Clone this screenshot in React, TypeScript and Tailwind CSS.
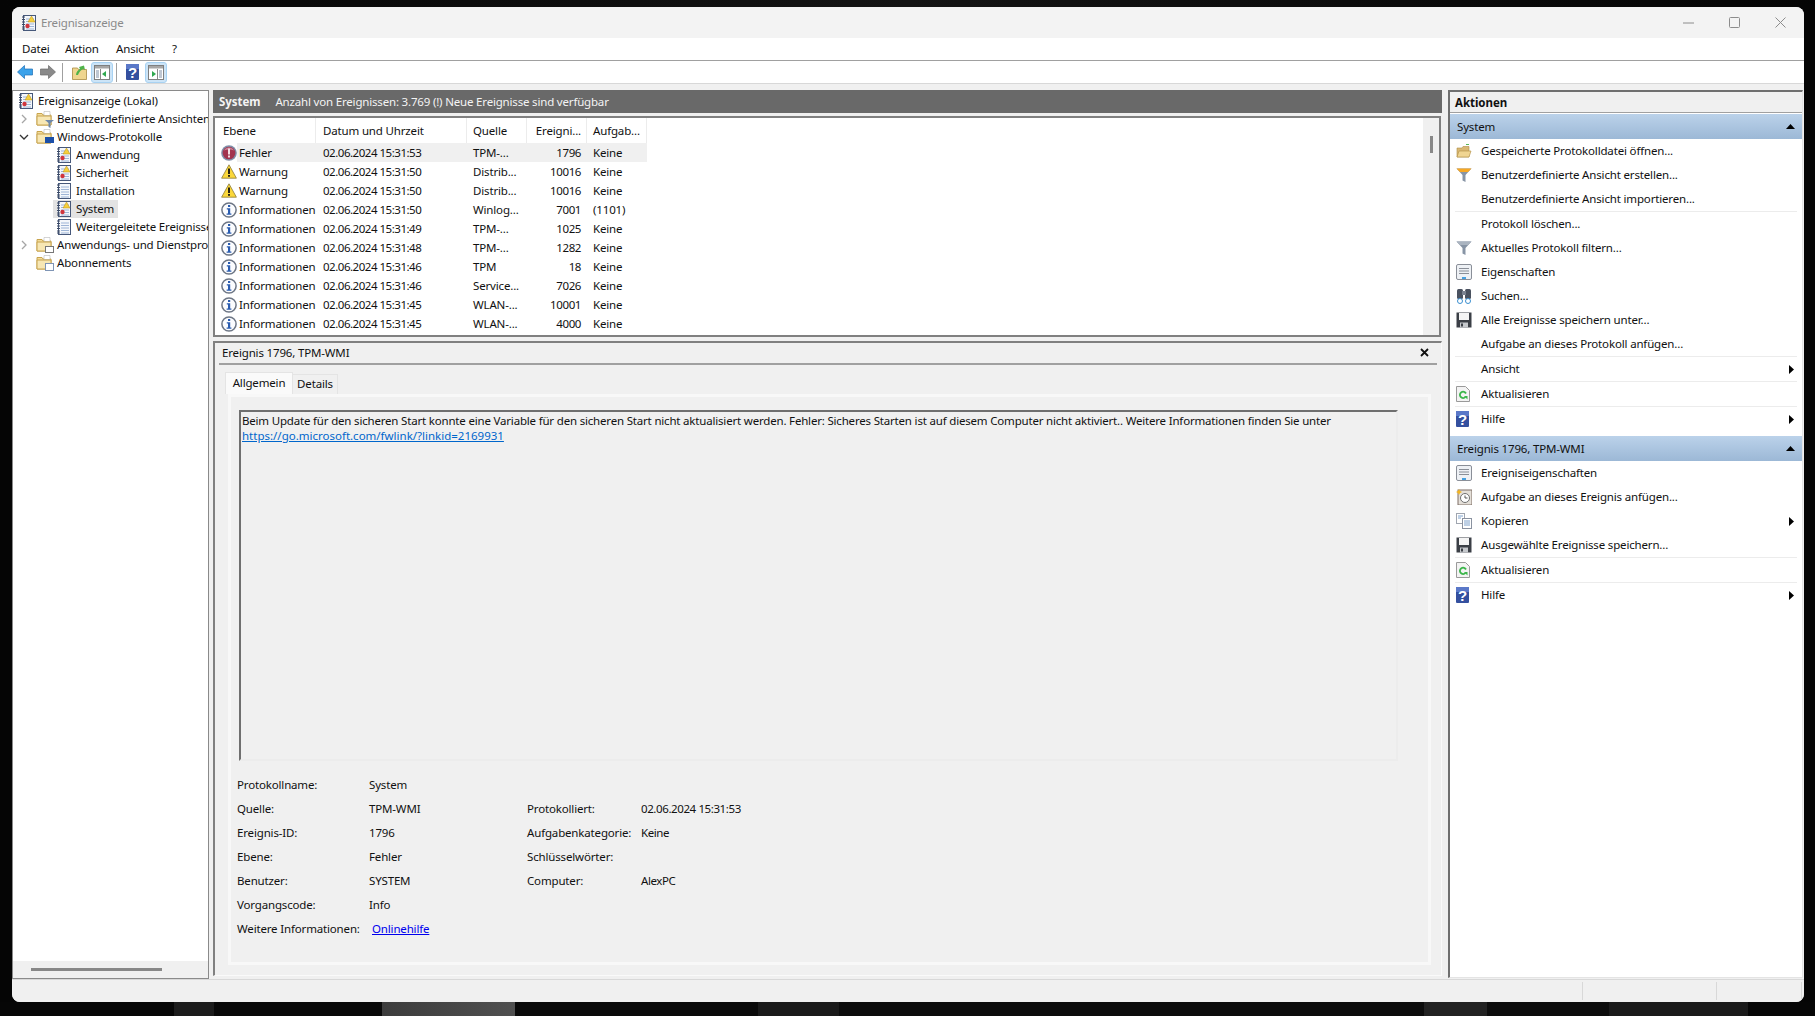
import type { ReactNode } from "react";

const font = "font-['Noto_Sans',sans-serif]";

function LogIcon({ alert = true }: { alert?: boolean }) {
  return (
    <svg width="16" height="16" viewBox="0 0 16 16" className="shrink-0">
      <rect x="2.5" y="0.5" width="12" height="15" fill="#f4f7fb" stroke="#46587a" />
      <path d="M1 2h3M1 4.5h3M1 7h3M1 9.5h3M1 12h3M1 14h3" stroke="#3c4a66" strokeWidth="1" />
      <path d="M5 4h8M5 6.5h8M5 9h8M5 11.5h8M5 14h8" stroke="#9db4d6" strokeWidth="1" />
      {alert && (
        <>
          <path d="M10.5 1l3.5 6H7z" fill="#f5cf3c" stroke="#b98f10" strokeWidth="0.5" />
          <circle cx="6.5" cy="11" r="2.2" fill="#d0353c" />
        </>
      )}
    </svg>
  );
}

function FolderIcon({ badge }: { badge?: ReactNode }) {
  return (
    <svg width="19" height="17" viewBox="0 0 19 17" className="shrink-0">
      <path d="M1 14V2.5h5l1 1.5h8v10z" fill="#f3dc9a" stroke="#c8a44e" />
      <path d="M8 0.5h6v4H8z" fill="#fff" stroke="#b8b8b8" strokeWidth="0.6" />
      <path d="M1 14V5h14v9z" fill="#f7e7b4" stroke="#c8a44e" />
      {badge}
    </svg>
  );
}

function ErrorIcon() {
  return (
    <svg width="16" height="16" viewBox="0 0 16 16" className="shrink-0">
      <circle cx="8" cy="8" r="7.8" fill="#7f8ea8" />
      <circle cx="8" cy="8" r="6.3" fill="#a2344f" />
      <path d="M3 5.5A5.6 5.6 0 0 1 13 5.5C10 4 6 4 3 5.5z" fill="#c77f92" />
      <rect x="7" y="3.5" width="2" height="6" fill="#f4dfe4" />
      <rect x="7" y="10.5" width="2" height="2" fill="#f4dfe4" />
    </svg>
  );
}

function WarnIcon() {
  return (
    <svg width="16" height="15" viewBox="0 0 16 15" className="shrink-0">
      <path d="M8 0.8L15.4 14.2H0.6z" fill="#fbd83a" stroke="#8a7a3a" strokeWidth="0.8" />
      <rect x="7.1" y="4.5" width="1.8" height="5.5" fill="#111" />
      <rect x="7.1" y="11" width="1.8" height="1.8" fill="#111" />
    </svg>
  );
}

function InfoIcon() {
  return (
    <svg width="16" height="16" viewBox="0 0 16 16" className="shrink-0">
      <circle cx="8" cy="8" r="7.1" fill="#fbfcfe" stroke="#6d7685" strokeWidth="1.5" />
      <rect x="7" y="3" width="2.2" height="2" fill="#2a5cb0" />
      <path d="M5.8 6.3h3.4v5.2h1.2v1.3H5.6v-1.3H7V7.6H5.8z" fill="#2a5cb0" />
    </svg>
  );
}

function HelpIcon() {
  return (
    <svg width="13" height="16" viewBox="0 0 13 16" className="shrink-0">
      <rect x="0" y="0" width="13" height="16" rx="1" fill="#34509f" />
      <rect x="0" y="0" width="13" height="5" fill="#5a78c8" />
      <text x="6.5" y="13.5" textAnchor="middle" fontSize="15" fontWeight="700" fill="#fff" fontFamily="Liberation Sans">?</text>
    </svg>
  );
}

function PanelIcon({ side }: { side: "left" | "right" }) {
  return (
    <svg width="16" height="15" viewBox="0 0 16 15">
      <rect x="0.5" y="0.5" width="15" height="14" fill="#fff" stroke="#7f7f7f" />
      <rect x="1" y="1" width="14" height="2.5" fill="#a6a6a6" />
      {side === "left" ? (
        <>
          <path d="M2 6h3M2 8h3M2 10h3M2 12h3" stroke="#7f8fa6" />
          <path d="M12 6v6L8 9z" fill="#2fa84f" />
          <path d="M6.5 4v10" stroke="#8a8a8a" />
        </>
      ) : (
        <>
          <path d="M11 6h3M11 8h3M11 10h3M11 12h3" stroke="#7f8fa6" />
          <path d="M4 6v6l4-3z" fill="#2fa84f" />
          <path d="M9.5 4v10" stroke="#8a8a8a" />
        </>
      )}
    </svg>
  );
}

function Chevron({ open }: { open?: boolean }) {
  return (
    <svg width="10" height="10" viewBox="0 0 10 10" className="shrink-0">
      {open ? (
        <path d="M1 3l4 4 4-4" fill="none" stroke="#333" strokeWidth="1.3" />
      ) : (
        <path d="M3 1l4 4-4 4" fill="none" stroke="#a6a6a6" strokeWidth="1.3" />
      )}
    </svg>
  );
}

function FilterIcon({ color }: { color: string }) {
  return (
    <svg width="16" height="16" viewBox="0 0 16 16">
      <path d="M0.5 1.5h15L9.5 8v7l-3-1.5V8z" fill="#8794a5" />
      <path d="M0.5 1.5h15L12 5H4z" fill={color} />
    </svg>
  );
}

function PropsIcon() {
  return (
    <svg width="16" height="16" viewBox="0 0 16 16">
      <rect x="0.5" y="0.5" width="15" height="15" rx="1.5" fill="#eef1f5" stroke="#8a8f98" />
      <path d="M3 4.5h10M3 7h10M3 9.5h10" stroke="#8a8f98" />
      <rect x="6" y="13" width="4" height="2" fill="#46a0e0" />
    </svg>
  );
}

function SaveIcon() {
  return (
    <svg width="16" height="16" viewBox="0 0 16 16">
      <path d="M0.5 0.5h15v15H0.5z" fill="#3b3f46" />
      <rect x="3" y="1" width="10" height="7" fill="#f4f4f4" />
      <rect x="4" y="10.5" width="8" height="5" fill="#c5c8cc" />
      <rect x="5" y="11.5" width="2" height="3" fill="#3b3f46" />
    </svg>
  );
}

function RefreshIcon() {
  return (
    <svg width="14" height="16" viewBox="0 0 14 16">
      <path d="M0.5 0.5h9l4 4v11H0.5z" fill="#f3f3f3" stroke="#9a9a9a" />
      <path d="M10 7.5A3.2 3.2 0 1 0 9.5 11" fill="none" stroke="#3bb54a" strokeWidth="1.8" />
      <path d="M8 10h3.5v3.5z" fill="#3bb54a" />
    </svg>
  );
}

function OpenFolderIcon() {
  return (
    <svg width="16" height="16" viewBox="0 0 16 16">
      <path d="M10 1.5h3" stroke="#58b858" />
      <path d="M1 14V5h5l1-1.5h6V14z" fill="#d9b874" stroke="#b08d44" strokeWidth="0.6" />
      <path d="M1 14l2-6h12l-2 6z" fill="#f0d592" stroke="#b08d44" strokeWidth="0.6" />
    </svg>
  );
}

function BinocularsIcon() {
  return (
    <svg width="16" height="16" viewBox="0 0 16 16">
      <rect x="1" y="1" width="6" height="10" rx="1.5" fill="#4a5260" />
      <rect x="9" y="1" width="6" height="10" rx="1.5" fill="#4a5260" />
      <rect x="6" y="3" width="4" height="4" fill="#7a8290" />
      <circle cx="4" cy="13" r="2.5" fill="#fff" stroke="#3b8fd0" />
      <circle cx="12" cy="13" r="2.5" fill="#fff" stroke="#3b8fd0" />
    </svg>
  );
}

function TaskIcon() {
  return (
    <svg width="16" height="16" viewBox="0 0 16 16">
      <rect x="2" y="1" width="14" height="15" fill="#e4dfd8" stroke="#7e6f66" />
      <circle cx="9" cy="9" r="4.5" fill="#fff" stroke="#6f6f6f" />
      <path d="M9 6.5V9h2.5" fill="none" stroke="#555" />
      <path d="M3 0l1 2 2 1-2 1-1 2-1-2-2-1 2-1z" fill="#f3b521" />
    </svg>
  );
}

function CopyIcon() {
  return (
    <svg width="16" height="16" viewBox="0 0 16 16">
      <rect x="0.5" y="0.5" width="8" height="10" fill="#fff" stroke="#a0a6b0" />
      <rect x="6.5" y="5.5" width="9" height="10" fill="#fff" stroke="#8a92a0" />
      <path d="M2 3h5M2 5h3M8 8h6M8 10h6M8 12h6" stroke="#7ea2cc" />
    </svg>
  );
}

function TreeRow({
  indent,
  chevron,
  icon,
  label,
  selected,
  wide,
}: {
  indent: string;
  chevron?: "open" | "closed";
  icon: ReactNode;
  label: string;
  selected?: boolean;
  wide?: boolean;
}) {
  return (
    <div className={`flex h-[18px] items-center whitespace-nowrap ${indent}`}>
      {chevron && (
        <span className="mr-[4px] ml-[6px] flex w-[10px] justify-center">
          <Chevron open={chevron === "open"} />
        </span>
      )}
      <div className={`flex h-[18px] items-center pr-[4px] pl-[3px] ${selected ? "bg-[#e3e3e3]" : ""}`}>
        <span className={`flex shrink-0 ${wide ? "w-[21px]" : "w-[20px]"}`}>{icon}</span>
        <span>{label}</span>
      </div>
    </div>
  );
}

const events = [
  ["err", "Fehler", "02.06.2024 15:31:53", "TPM-...", "1796", "Keine"],
  ["warn", "Warnung", "02.06.2024 15:31:50", "Distrib...", "10016", "Keine"],
  ["warn", "Warnung", "02.06.2024 15:31:50", "Distrib...", "10016", "Keine"],
  ["info", "Informationen", "02.06.2024 15:31:50", "Winlog...", "7001", "(1101)"],
  ["info", "Informationen", "02.06.2024 15:31:49", "TPM-...", "1025", "Keine"],
  ["info", "Informationen", "02.06.2024 15:31:48", "TPM-...", "1282", "Keine"],
  ["info", "Informationen", "02.06.2024 15:31:46", "TPM", "18", "Keine"],
  ["info", "Informationen", "02.06.2024 15:31:46", "Service...", "7026", "Keine"],
  ["info", "Informationen", "02.06.2024 15:31:45", "WLAN-...", "10001", "Keine"],
  ["info", "Informationen", "02.06.2024 15:31:45", "WLAN-...", "4000", "Keine"],
];

function EventRow({ ev, selected }: { ev: string[]; selected: boolean }) {
  return (
    <div className="flex h-[19px] items-center whitespace-nowrap">
      <span className="flex w-[20px] shrink-0 justify-start pl-[4px]">
        {ev[0] === "err" ? <ErrorIcon /> : ev[0] === "warn" ? <WarnIcon /> : <InfoIcon />}
      </span>
      <div className={`flex h-[19px] items-center ${selected ? "bg-[#f0f0f0]" : ""}`}>
        <span className="w-[86px] pl-[2px]">{ev[1]}</span>
        <span className="w-[150px] tracking-[-0.48px]">{ev[2]}</span>
        <span className="w-[54px]">{ev[3]}</span>
        <span className="w-[60px] pr-[6px] text-right tracking-[-0.4px]">{ev[4]}</span>
        <span className="w-[60px] pl-[6px]">{ev[5]}</span>
      </div>
    </div>
  );
}

function SectionHead({ title }: { title: string }) {
  return (
    <div className="flex h-[25px] items-center justify-between bg-gradient-to-b from-[#bbd2ea] to-[#9cb8d6] pr-[7px] pl-[7px]">
      <span>{title}</span>
      <svg width="9" height="5" viewBox="0 0 9 5">
        <path d="M0 5L4.5 0 9 5z" fill="#000" />
      </svg>
    </div>
  );
}

function ActionRow({ icon, label, arrow, line }: { icon?: ReactNode; label: string; arrow?: boolean; line?: boolean }) {
  return (
    <div className={line ? "mx-[5px] border-b border-[#ececec]" : "mx-[5px]"}>
      <div className="flex h-[24px] items-center">
        <span className="flex w-[26px] shrink-0 justify-start pl-[1px]">{icon}</span>
        <span className="flex-1 whitespace-nowrap">{label}</span>
        {arrow && (
          <svg width="5" height="9" viewBox="0 0 5 9" className="mr-[3px]">
            <path d="M0 0l5 4.5L0 9z" fill="#000" />
          </svg>
        )}
      </div>
    </div>
  );
}

const infoLeft = [
  ["Protokollname:", "System"],
  ["Quelle:", "TPM-WMI"],
  ["Ereignis-ID:", "1796"],
  ["Ebene:", "Fehler"],
  ["Benutzer:", "SYSTEM"],
  ["Vorgangscode:", "Info"],
];

const infoRight = [
  ["", ""],
  ["Protokolliert:", "02.06.2024 15:31:53"],
  ["Aufgabenkategorie:", "Keine"],
  ["Schlüsselwörter:", ""],
  ["Computer:", "AlexPC"],
  ["", ""],
];

export default function App() {
  return (
    <div className={`flex h-[1016px] w-[1815px] flex-col overflow-hidden bg-[#050505] text-[11.5px] tracking-[-0.16px] text-[#111] ${font}`}>
      {/* wallpaper above the window */}
      <div className="h-[7px] shrink-0 bg-gradient-to-r from-[#050505] via-[#141414] to-[#050505]" />

      <div className="ml-[12px] flex h-[995px] w-[1792px] shrink-0 flex-col overflow-hidden rounded-lg bg-[#f0f0f0]">
        {/* title bar */}
        <div className="flex h-[31px] shrink-0 items-center justify-between bg-[#f3f3f3] pr-[18px] pl-[9px]">
          <div className="flex items-center gap-[4px] text-[#8a8a8a]">
            <LogIcon />
            <span>Ereignisanzeige</span>
          </div>
          <div className="flex items-center gap-[35px]">
            <svg width="11" height="11" viewBox="0 0 11 11"><path d="M0 6h11" stroke="#8c8c8c" /></svg>
            <svg width="11" height="11" viewBox="0 0 11 11"><rect x="0.5" y="0.5" width="10" height="10" rx="1" fill="none" stroke="#8c8c8c" /></svg>
            <svg width="11" height="11" viewBox="0 0 11 11"><path d="M0.5 0.5l10 10M10.5 0.5l-10 10" stroke="#8c8c8c" /></svg>
          </div>
        </div>
        {/* menu */}
        <div className="flex h-[23px] shrink-0 items-center border-b border-[#a0a0a0] bg-white pl-[10px]">
          <span className="w-[43px]">Datei</span>
          <span className="w-[51px]">Aktion</span>
          <span className="w-[56px]">Ansicht</span>
          <span>?</span>
        </div>
        {/* toolbar */}
        <div className="flex h-[23px] shrink-0 items-center border-b border-[#d8d8d8] bg-white pl-[5px]">
          <svg width="16" height="14" viewBox="0 0 16 14">
            <path d="M0.5 7l7-6.5V4h8v6h-8v3.5z" fill="#3ba2ea" stroke="#1e6fb5" strokeWidth="0.7" />
          </svg>
          <svg width="16" height="14" viewBox="0 0 16 14" className="ml-[7px]">
            <path d="M15.5 7L8.5 0.5V4h-8v6h8v3.5z" fill="#8a8a8a" stroke="#6a6a6a" strokeWidth="0.7" />
          </svg>
          <span className="mx-[6px] h-[19px] w-px bg-[#a0a0a0]" />
          <svg width="15" height="15" viewBox="0 0 15 15" className="ml-[3px]">
            <path d="M0.5 14.5V3h5l1 1.5h8v10z" fill="#efd58e" stroke="#a98b42" strokeWidth="0.8" />
            <path d="M4 10c0-3 2-5 4-6L7 2l5-1.5L13 5l-2-1c-2 1-4 3-5 6z" fill="#4fb34a" />
          </svg>
          <span className="ml-[4px] flex h-[21px] w-[22px] items-center justify-center rounded-[3px] border border-[#a8d2f2] bg-[#cce4f7]">
            <PanelIcon side="left" />
          </span>
          <span className="mx-[3px] h-[19px] w-px bg-[#a0a0a0]" />
          <span className="ml-[6px] flex">
            <HelpIcon />
          </span>
          <span className="ml-[6px] flex h-[21px] w-[22px] items-center justify-center rounded-[3px] border border-[#a8d2f2] bg-[#cce4f7]">
            <PanelIcon side="right" />
          </span>
        </div>

        {/* main area */}
        <div className="flex min-h-0 flex-1 pt-[6px]">
          {/* tree */}
          <div className="flex w-[197px] shrink-0 flex-col border border-[#8a8a8a] bg-white">
            <div className="flex-1 overflow-hidden pt-[1px]">
              <TreeRow indent="pl-[2px]" icon={<LogIcon />} label="Ereignisanzeige (Lokal)" />
              <TreeRow indent="" wide chevron="closed" icon={<FolderIcon badge={<path d="M9 9h9l-3.5 3v5l-2-1v-4z" fill="#6f88a8" />} />} label="Benutzerdefinierte Ansichten" />
              <TreeRow indent="" wide chevron="open" icon={<FolderIcon badge={<rect x="9" y="8" width="9" height="6" fill="#1b4fa8" />} />} label="Windows-Protokolle" />
              <TreeRow indent="pl-[40px]" icon={<LogIcon />} label="Anwendung" />
              <TreeRow indent="pl-[40px]" icon={<LogIcon />} label="Sicherheit" />
              <TreeRow indent="pl-[40px]" icon={<LogIcon alert={false} />} label="Installation" />
              <TreeRow indent="pl-[40px]" icon={<LogIcon />} label="System" selected />
              <TreeRow indent="pl-[40px]" icon={<LogIcon alert={false} />} label="Weitergeleitete Ereignisse" />
              <TreeRow indent="" wide chevron="closed" icon={<FolderIcon badge={<rect x="9.5" y="9.5" width="8" height="6" fill="#fff" stroke="#777" />} />} label="Anwendungs- und Dienstprotokolle" />
              <TreeRow indent="pl-[20px]" wide icon={<FolderIcon badge={<rect x="9.5" y="8.5" width="8" height="7" fill="#fff" stroke="#7f95b5" />} />} label="Abonnements" />
            </div>
            <div className="flex h-[17px] shrink-0 items-center bg-[#f0f0f0] pl-[18px]">
              <div className="h-[3px] w-[131px] bg-[#888]" />
            </div>
          </div>

          {/* centre column */}
          <div className="ml-[4px] flex w-[1229px] shrink-0 flex-col">
            <div className="flex h-[23px] shrink-0 items-center gap-[15px] bg-[#696969] pl-[6px] text-[#f4f4f4]">
              <span className="font-bold tracking-[-0.05px]">System</span>
              <span className="tracking-[-0.18px]">Anzahl von Ereignissen: 3.769 (!) Neue Ereignisse sind verfügbar</span>
            </div>
            <div className="mt-[3px] mr-[1px] flex h-[221px] shrink-0 overflow-hidden border-2 border-[#808080] bg-white">
              <div className="flex-1 overflow-hidden pl-[2px]">
                <div className="flex h-[25px] items-center whitespace-nowrap">
                  <span className="flex h-full w-[99px] items-center border-r border-[#ececec] pl-[6px]">Ebene</span>
                  <span className="flex h-full w-[151px] items-center border-r border-[#ececec] pl-[7px]">Datum und Uhrzeit</span>
                  <span className="flex h-full w-[60px] items-center border-r border-[#ececec] pl-[6px]">Quelle</span>
                  <span className="flex h-full w-[60px] items-center justify-end border-r border-[#ececec] pr-[5px]">Ereigni...</span>
                  <span className="flex h-full w-[60px] items-center border-r border-[#ececec] pl-[6px]">Aufgab...</span>
                </div>
                {events.map((ev, i) => (
                  <EventRow key={i} ev={ev} selected={i === 0} />
                ))}
              </div>
              <div className="flex w-[16px] shrink-0 justify-center bg-[#f0f0f0] pt-[18px]">
                <div className="h-[17px] w-[3px] bg-[#888]" />
              </div>
            </div>

            {/* detail pane */}
            <div className="mt-[4px] mb-[3px] flex min-h-0 flex-1 flex-col border-t-2 border-r border-b border-l-2 border-t-[#808080] border-r-[#fafafa] border-b-[#fafafa] border-l-[#808080] bg-[#f0f0f0] px-[4px] pb-[10px]">
              <div className="flex h-[22px] shrink-0 items-center justify-between border-b-2 border-[#a0a0a0] pr-[8px] pl-[3px]">
                <span>Ereignis 1796, TPM-WMI</span>
                <svg width="9" height="9" viewBox="0 0 9 9" className="mb-[2px]"><path d="M1 1l7 7M8 1l-7 7" stroke="#111" strokeWidth="1.8" /></svg>
              </div>
              <div className="mt-[7px] flex h-[22px] shrink-0 items-end pl-[6px]">
                <span className="flex h-[22px] w-[68px] items-center justify-center border border-b-0 border-[#e4e4e4] bg-[#fafafa] pb-[2px]">Allgemein</span>
                <span className="flex h-[20px] w-[45px] items-center justify-center border-t border-r border-[#e4e4e4] pb-[1px]">Details</span>
              </div>
              <div className="mr-[6px] ml-[9px] flex min-h-0 flex-1 flex-col border-[3px] border-[#f8f8f8] pr-[30px] pl-[8px]">
                <div className="mt-[13px] h-[351px] shrink-0 border-2 border-t-[#6f6f6f] border-r-[#ececec] border-b-[#ececec] border-l-[#6f6f6f] pt-[1px] pl-[1px] leading-[15px]">
                  <div className="whitespace-nowrap tracking-[-0.185px]">
                    Beim Update für den sicheren Start konnte eine Variable für den sicheren Start nicht aktualisiert werden. Fehler: Sicheres Starten ist auf diesem Computer nicht aktiviert.. Weitere Informationen finden Sie unter
                  </div>
                  <div className="tracking-normal text-[#0066cc] underline">https://go.microsoft.com/fwlink/?linkid=2169931</div>
                </div>
                <div className="mt-[12px] ml-[-2px] flex">
                  <div className="w-[290px] shrink-0">
                    {infoLeft.map(([k, v]) => (
                      <div key={k} className="flex h-[24px] items-center">
                        <span className="w-[132px]">{k}</span>
                        <span>{v}</span>
                      </div>
                    ))}
                    <div className="flex h-[24px] items-center">
                      <span className="w-[135px] whitespace-nowrap">Weitere Informationen:</span>
                      <span className="text-[#0000ee] underline">Onlinehilfe</span>
                    </div>
                  </div>
                  <div>
                    {infoRight.map(([k, v], i) => (
                      <div key={i} className="flex h-[24px] items-center">
                        <span className="w-[114px] whitespace-nowrap">{k}</span>
                        <span className="tracking-[-0.4px]">{v}</span>
                      </div>
                    ))}
                  </div>
                </div>
              </div>
            </div>
          </div>

          {/* actions */}
          <div className="mb-[1px] ml-[6px] flex w-[355px] shrink-0 flex-col border-t-2 border-r border-b border-l-2 border-t-[#6f6f6f] border-r-[#e4e4e4] border-b-[#e4e4e4] border-l-[#6f6f6f] bg-white">
            <div className="flex h-[21px] shrink-0 items-center border-b border-[#a0a0a0] bg-[#f0f0f0] pt-[1px] pl-[5px] font-bold tracking-[-0.05px]">Aktionen</div>
            <div className="h-[1px] shrink-0 bg-white" />
            <SectionHead title="System" />
            <ActionRow icon={<OpenFolderIcon />} label="Gespeicherte Protokolldatei öffnen..." />
            <ActionRow icon={<FilterIcon color="#f7a823" />} label="Benutzerdefinierte Ansicht erstellen..." />
            <ActionRow label="Benutzerdefinierte Ansicht importieren..." line />
            <ActionRow label="Protokoll löschen..." />
            <ActionRow icon={<FilterIcon color="#aab4c0" />} label="Aktuelles Protokoll filtern..." />
            <ActionRow icon={<PropsIcon />} label="Eigenschaften" />
            <ActionRow icon={<BinocularsIcon />} label="Suchen..." />
            <ActionRow icon={<SaveIcon />} label="Alle Ereignisse speichern unter..." />
            <ActionRow label="Aufgabe an dieses Protokoll anfügen..." line />
            <ActionRow label="Ansicht" arrow line />
            <ActionRow icon={<RefreshIcon />} label="Aktualisieren" line />
            <ActionRow icon={<HelpIcon />} label="Hilfe" arrow />
            <div className="h-[5px] shrink-0" />
            <SectionHead title="Ereignis 1796, TPM-WMI" />
            <ActionRow icon={<PropsIcon />} label="Ereigniseigenschaften" />
            <ActionRow icon={<TaskIcon />} label="Aufgabe an dieses Ereignis anfügen..." />
            <ActionRow icon={<CopyIcon />} label="Kopieren" arrow />
            <ActionRow icon={<SaveIcon />} label="Ausgewählte Ereignisse speichern..." line />
            <ActionRow icon={<RefreshIcon />} label="Aktualisieren" line />
            <ActionRow icon={<HelpIcon />} label="Hilfe" arrow />
          </div>
        </div>

        {/* status bar */}
        <div className="flex h-[23px] shrink-0 items-stretch border-t border-[#d8d8d8] bg-[#f0f0f0] py-[2px]">
          <div className="w-[1571px] border-r border-[#d8d8d8]" />
          <div className="w-[134px] border-r border-[#d8d8d8]" />
          <div className="w-[85px] border-r border-[#d8d8d8]" />
        </div>
      </div>

      {/* wallpaper below the window */}
      <div className="flex h-[14px] shrink-0">
        <div className="w-[174px] bg-[#060606]" />
        <div className="w-[40px] bg-[#1c1c1c]" />
        <div className="w-[168px] bg-[#080808]" />
        <div className="w-[133px] bg-gradient-to-r from-[#3c3c3c] to-[#505050]" />
        <div className="w-[243px] bg-[#0a0a0a]" />
        <div className="w-[81px] bg-[#1a1a1a]" />
        <div className="w-[585px] bg-[#0c0c0c]" />
        <div className="w-[63px] bg-[#222]" />
        <div className="w-[122px] bg-[#0c0c0c]" />
        <div className="w-[139px] bg-[#1a1a1a]" />
        <div className="flex-1 bg-[#060606]" />
      </div>
    </div>
  );
}
